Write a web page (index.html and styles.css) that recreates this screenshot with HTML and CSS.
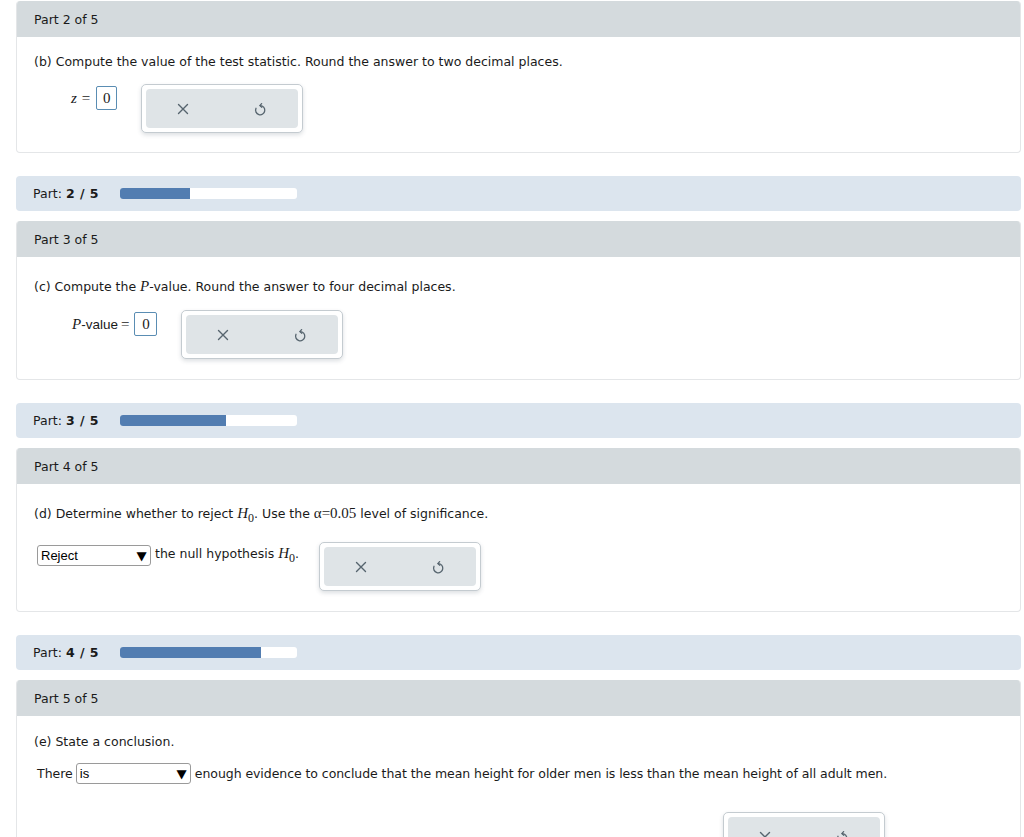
FILE: index.html
```html
<!DOCTYPE html>
<html lang="en">
<head>
<meta charset="utf-8">
<title>Hypothesis test</title>
<link rel="stylesheet" href="styles.css">
</head>
<body>
<div class="page">

  <section class="part part-b">
    <header class="part-head">Part 2 of 5</header>
    <div class="part-body">
      <p class="prompt">(b) Compute the value of the test statistic. Round the answer to two decimal places.</p>
      <div class="answer-row answer-row-b">
        <span class="label"><i class="mvar">z</i><span class="meq">=</span></span>
        <span class="numbox">0</span>
        <div class="tools">
          <div class="tools-inner">
            <svg class="ico" viewBox="0 0 14 14" width="14" height="14"><path d="M2.5 2.5 L11.5 11.5 M11.5 2.5 L2.5 11.5" fill="none" stroke="#56646e" stroke-width="1.4" stroke-linecap="round"/></svg>
            <svg class="ico" viewBox="0 0 14 14" width="14" height="14"><path d="M7.2 3.6 A4.6 4.6 0 1 1 3 6.3" fill="none" stroke="#56646e" stroke-width="1.3" stroke-linecap="round"/><path d="M8.6 1.6 L6.8 3.6 L8.8 5.2" fill="none" stroke="#56646e" stroke-width="1.3" stroke-linecap="round" stroke-linejoin="round"/></svg>
          </div>
        </div>
      </div>
    </div>
  </section>

  <div class="progress">
    <span class="progress-label">Part: <b>2 / 5</b></span>
    <span class="bar"><span class="fill" style="width:40%"></span></span>
  </div>

  <section class="part part-c">
    <header class="part-head">Part 3 of 5</header>
    <div class="part-body">
      <p class="prompt">(c) Compute the <i class="mvar">P</i>-value. Round the answer to four decimal places.</p>
      <div class="answer-row answer-row-c">
        <span class="label"><i class="mvar">P</i><span class="mtext">-value</span><span class="meq">=</span></span>
        <span class="numbox numbox-wide">0</span>
        <div class="tools">
          <div class="tools-inner">
            <svg class="ico" viewBox="0 0 14 14" width="14" height="14"><path d="M2.5 2.5 L11.5 11.5 M11.5 2.5 L2.5 11.5" fill="none" stroke="#56646e" stroke-width="1.4" stroke-linecap="round"/></svg>
            <svg class="ico" viewBox="0 0 14 14" width="14" height="14"><path d="M7.2 3.6 A4.6 4.6 0 1 1 3 6.3" fill="none" stroke="#56646e" stroke-width="1.3" stroke-linecap="round"/><path d="M8.6 1.6 L6.8 3.6 L8.8 5.2" fill="none" stroke="#56646e" stroke-width="1.3" stroke-linecap="round" stroke-linejoin="round"/></svg>
          </div>
        </div>
      </div>
    </div>
  </section>

  <div class="progress">
    <span class="progress-label">Part: <b>3 / 5</b></span>
    <span class="bar"><span class="fill" style="width:60%"></span></span>
  </div>

  <section class="part part-d">
    <header class="part-head">Part 4 of 5</header>
    <div class="part-body">
      <p class="prompt">(d) Determine whether to reject <i class="mvar">H</i><sub class="msub">0</sub>. Use the <span class="mnum">α=0.05</span> level of significance.</p>
      <div class="answer-row answer-row-d">
        <span class="dropdown dropdown-d"><span class="dd-text">Reject</span><span class="dd-arrow">▼</span></span>
        <span class="inline-text">the null hypothesis <i class="mvar">H</i><sub class="msub">0</sub>.</span>
        <div class="tools">
          <div class="tools-inner">
            <svg class="ico" viewBox="0 0 14 14" width="14" height="14"><path d="M2.5 2.5 L11.5 11.5 M11.5 2.5 L2.5 11.5" fill="none" stroke="#56646e" stroke-width="1.4" stroke-linecap="round"/></svg>
            <svg class="ico" viewBox="0 0 14 14" width="14" height="14"><path d="M7.2 3.6 A4.6 4.6 0 1 1 3 6.3" fill="none" stroke="#56646e" stroke-width="1.3" stroke-linecap="round"/><path d="M8.6 1.6 L6.8 3.6 L8.8 5.2" fill="none" stroke="#56646e" stroke-width="1.3" stroke-linecap="round" stroke-linejoin="round"/></svg>
          </div>
        </div>
      </div>
    </div>
  </section>

  <div class="progress">
    <span class="progress-label">Part: <b>4 / 5</b></span>
    <span class="bar"><span class="fill" style="width:80%"></span></span>
  </div>

  <section class="part part-e">
    <header class="part-head">Part 5 of 5</header>
    <div class="part-body">
      <p class="prompt">(e) State a conclusion.</p>
      <div class="sentence-row">
        <span>There</span>
        <span class="dropdown dropdown-e"><span class="dd-text">is</span><span class="dd-arrow">▼</span></span>
        <span class="sentence-tail">enough evidence to conclude that the mean height for older men is less than the mean height of all adult men.</span>
      </div>
      <div class="tools-row">
        <div class="tools">
          <div class="tools-inner">
            <svg class="ico" viewBox="0 0 14 14" width="14" height="14"><path d="M2.5 2.5 L11.5 11.5 M11.5 2.5 L2.5 11.5" fill="none" stroke="#56646e" stroke-width="1.4" stroke-linecap="round"/></svg>
            <svg class="ico" viewBox="0 0 14 14" width="14" height="14"><path d="M7.2 3.6 A4.6 4.6 0 1 1 3 6.3" fill="none" stroke="#56646e" stroke-width="1.3" stroke-linecap="round"/><path d="M8.6 1.6 L6.8 3.6 L8.8 5.2" fill="none" stroke="#56646e" stroke-width="1.3" stroke-linecap="round" stroke-linejoin="round"/></svg>
          </div>
        </div>
      </div>
    </div>
  </section>

</div>
</body>
</html>
```

FILE: styles.css
```css
html, body {
  margin: 0;
  padding: 0;
  background: #ffffff;
}

body {
  font-family: "DejaVu Sans", Verdana, sans-serif;
  font-size: 12.5px;
  color: #1a1a1a;
}

.page {
  padding: 1px 3px 0 16px;
  display: flex;
  flex-direction: column;
}

/* ---- question card ---- */
.part {
  border: 1px solid #e4e6e8;
  border-top: none;
  border-radius: 4px;
  overflow: hidden;
}

.part-head {
  background: #d4dadd;
  height: 36px;
  line-height: 37px;
  padding-left: 17px;
}

.part-body {
  padding: 0 17px;
}

.prompt {
  margin: 0;
  line-height: 18px;
}

.part-b .prompt { padding-top: 16px; }
.part-b .part-body { padding-bottom: 19px; }

.part-c .prompt { padding-top: 20px; }
.part-c .part-body { padding-bottom: 20px; }

.part-d .prompt { padding-top: 20px; }
.part-d .part-body { padding-bottom: 20px; }

.part-e .prompt { padding-top: 17px; }
.part-e .part-body { padding-bottom: 40px; }

/* ---- answer row ---- */
.answer-row {
  display: flex;
  align-items: flex-start;
}

.answer-row-b { margin-top: 13px; padding-left: 37px; }
.answer-row-c { margin-top: 14px; padding-left: 38px; }
.answer-row-d { margin-top: 19px; padding-left: 3px; }

.label {
  display: inline-flex;
  align-items: center;
  height: 24px;
  margin-top: 2px;
  margin-right: 4px;
}

.answer-row-b .label { margin-right: 6px; }
.answer-row-b .meq { margin-left: 5px; }
.answer-row-c .label { margin-right: 5px; }

.mvar {
  font-family: "Liberation Serif", "Times New Roman", serif;
  font-style: italic;
  font-size: 15px;
}

.meq {
  font-family: "Liberation Serif", "Times New Roman", serif;
  font-size: 15px;
  margin-left: 3px;
}

.mtext {
  font-family: "Liberation Sans", Arial, sans-serif;
  font-size: 13.5px;
}

.mnum {
  font-family: "Liberation Serif", "Times New Roman", serif;
  font-size: 15px;
}

.msub {
  font-family: "Liberation Serif", "Times New Roman", serif;
  font-size: 12px;
  vertical-align: -4px;
  line-height: 0;
}

.numbox {
  display: inline-flex;
  align-items: center;
  justify-content: center;
  box-sizing: border-box;
  width: 21px;
  height: 24px;
  margin-top: 2px;
  border: 1px solid #5a8db3;
  border-radius: 2px;
  font-family: "Liberation Serif", "Times New Roman", serif;
  font-size: 15px;
}

.numbox-wide { width: 23px; }

/* ---- clear / undo tool box ---- */
.tools {
  box-sizing: border-box;
  width: 162px;
  height: 49px;
  margin-left: 24px;
  padding: 4px;
  background: #ffffff;
  border: 1px solid #c4cbd0;
  border-radius: 5px;
  box-shadow: 0 2px 4px rgba(60, 80, 95, 0.18);
}

.tools-inner {
  height: 100%;
  background: #dfe4e7;
  border-radius: 4px;
  display: flex;
  align-items: center;
  justify-content: space-between;
  padding: 0 31px 0 30px;
}

.ico {
  display: block;
}

/* ---- dropdowns ---- */
.dropdown {
  box-sizing: border-box;
  display: inline-flex;
  align-items: center;
  justify-content: space-between;
  height: 21px;
  border: 1px solid #9a9a9a;
  border-radius: 3px;
  padding: 0 4px 0 3px;
  font-family: "Liberation Sans", Arial, sans-serif;
  font-size: 13px;
  color: #000;
  background: #fff;
}

.dd-arrow {
  font-family: "DejaVu Sans", sans-serif;
  font-size: 12px;
  transform: scaleX(1.1);
}

.dropdown-d {
  width: 114px;
  margin-top: 3px;
}

.inline-text {
  margin-left: 4px;
  margin-top: 2px;
  line-height: 18px;
}

.part-d .tools { margin-left: 20px; }

.sentence-row {
  display: flex;
  align-items: center;
  gap: 3px;
  margin-top: 12px;
  padding-left: 3px;
}

.sentence-tail {
  margin-left: 1px;
  letter-spacing: -0.06px;
}

.dropdown-e {
  width: 115px;
}

.tools-row {
  display: flex;
  justify-content: flex-start;
  padding-left: 665px;
  margin-top: 28px;
}

.tools-row .tools { margin-left: 24px; }

/* ---- progress strip ---- */
.progress {
  display: flex;
  align-items: center;
  height: 35px;
  margin: 23px 0 10px;
  padding-left: 17px;
  background: #dce5ee;
  border-radius: 4px;
}

.progress-label b {
  font-weight: bold;
  word-spacing: 1px;
}

.bar {
  display: block;
  width: 177px;
  height: 11px;
  margin-left: 21px;
  background: #ffffff;
  border-radius: 3px;
  overflow: hidden;
}

.fill {
  display: block;
  height: 100%;
  background: #527db1;
}
```
